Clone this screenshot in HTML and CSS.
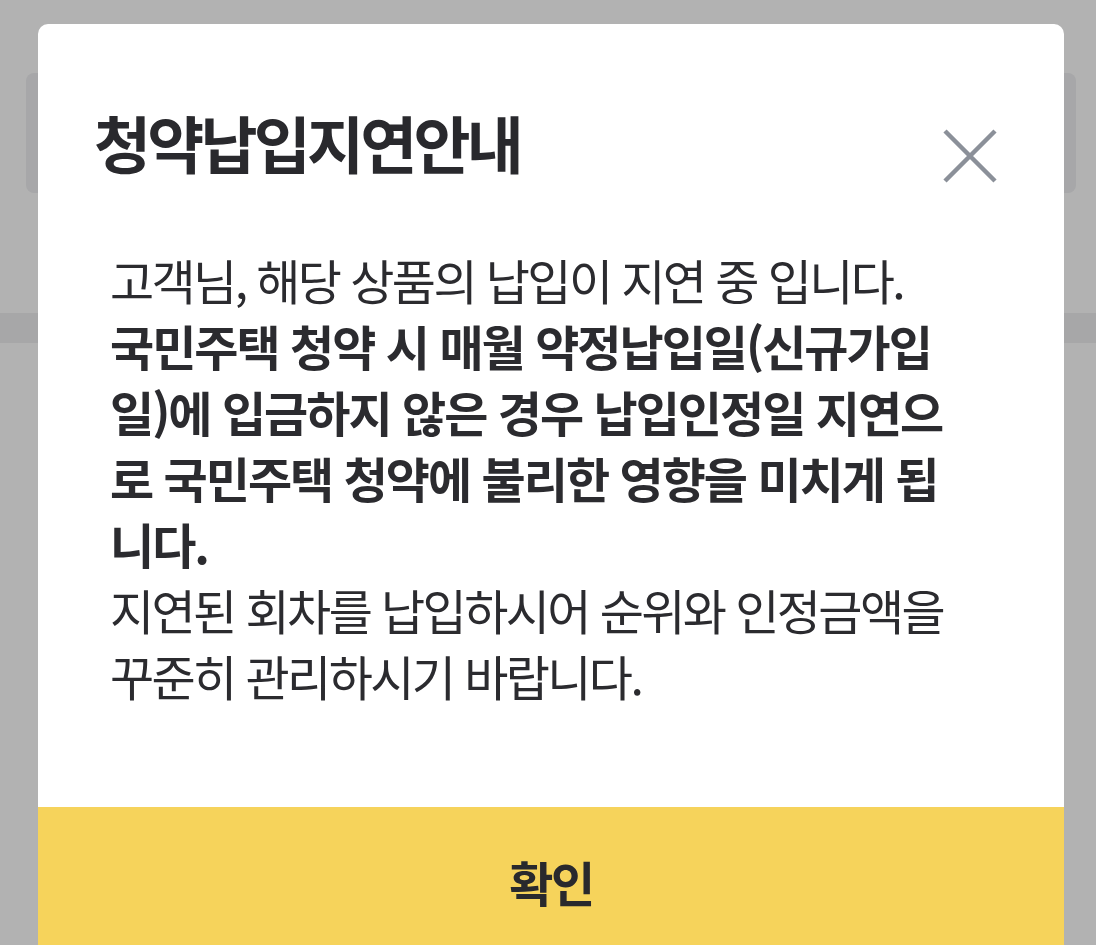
FILE: index.html
```html
<!DOCTYPE html>
<html lang="ko">
<head>
  <meta charset="UTF-8" />
  <meta name="viewport" content="width=device-width, initial-scale=1.0"/>
  <title>청약납입지연안내</title>
  <link rel="stylesheet" href="styles.css">
</head>
<body>
  <div class="page">
    <div class="page-card"></div>
    <div class="page-band"></div>
  </div>

  <div class="dim"></div>

  <div class="modal" role="dialog" aria-labelledby="modalTitle">
    <div class="modal-head">
      <h1 id="modalTitle">청약납입지연안내</h1>
      <button class="close-btn" aria-label="닫기">
        <svg viewBox="0 0 56 56" width="56" height="56">
          <path d="M3 3 L53 53 M53 3 L3 53" stroke="#8b9099" stroke-width="4.5" fill="none"/>
        </svg>
      </button>
    </div>

    <div class="modal-body">
      <p>고객님, 해당 상품의 납입이 지연 중 입니다.</p>
      <p class="strong">국민주택 청약 시 매월 약정납입일(신규가입일)에 입금하지 않은 경우 납입인정일 지연으로 국민주택 청약에 불리한 영향을 미치게 됩니다.</p>
      <p>지연된 회차를 납입하시어 순위와 인정금액을 꾸준히 관리하시기 바랍니다.</p>
    </div>

    <button class="confirm-btn">확인</button>
  </div>
</body>
</html>
```

FILE: styles.css
```css
body {
    margin: 0;
    padding: 0;
    font-family: "Noto Sans CJK KR", "Noto Sans", sans-serif;
    background-color: #fff;
    height: 945px;
    overflow: hidden;
    color: #2b2b2f;
}

.page {
    padding-top: 73px;
}

.page-card {
    margin: 0 20px 0 26px;
    height: 120px;
    border-radius: 8px;
    background: #eff0f2;
}

.page-band {
    margin-top: 120px;
    height: 30px;
    background: #f0f0f1;
}

.dim {
    position: fixed;
    inset: 0;
    background: rgba(0, 0, 0, 0.3);
}

.modal {
    position: absolute;
    top: 24px;
    left: 38px;
    width: 1026px;
    height: 930px;
    background: #fff;
    border-radius: 10px 10px 0 0;
    display: flex;
    flex-direction: column;
}

.modal-head {
    display: flex;
    justify-content: space-between;
    align-items: flex-start;
    padding: 76px 66px 0 56px;
}

.modal-head h1 {
    margin: 0;
    font-size: 62px;
    font-weight: 700;
    letter-spacing: -3.8px;
    line-height: 84px;
    color: #29292d;
}

.close-btn {
    margin-top: 28px;
    padding: 0;
    border: none;
    background: none;
    width: 56px;
    height: 56px;
    cursor: pointer;
}

.modal-body {
    flex: 1;
    padding: 62px 98px 0 72px;
    font-size: 48px;
    line-height: 66px;
    letter-spacing: -2.6px;
}

.modal-body p {
    margin: 0;
}

.modal-body .strong {
    font-weight: 700;
    letter-spacing: -2px;
}

.confirm-btn {
    height: 147px;
    border: none;
    background: #f6d35b;
    font-family: inherit;
    font-size: 48px;
    font-weight: 700;
    letter-spacing: -2.5px;
    color: #29292d;
    padding: 0;
    cursor: pointer;
}
```
